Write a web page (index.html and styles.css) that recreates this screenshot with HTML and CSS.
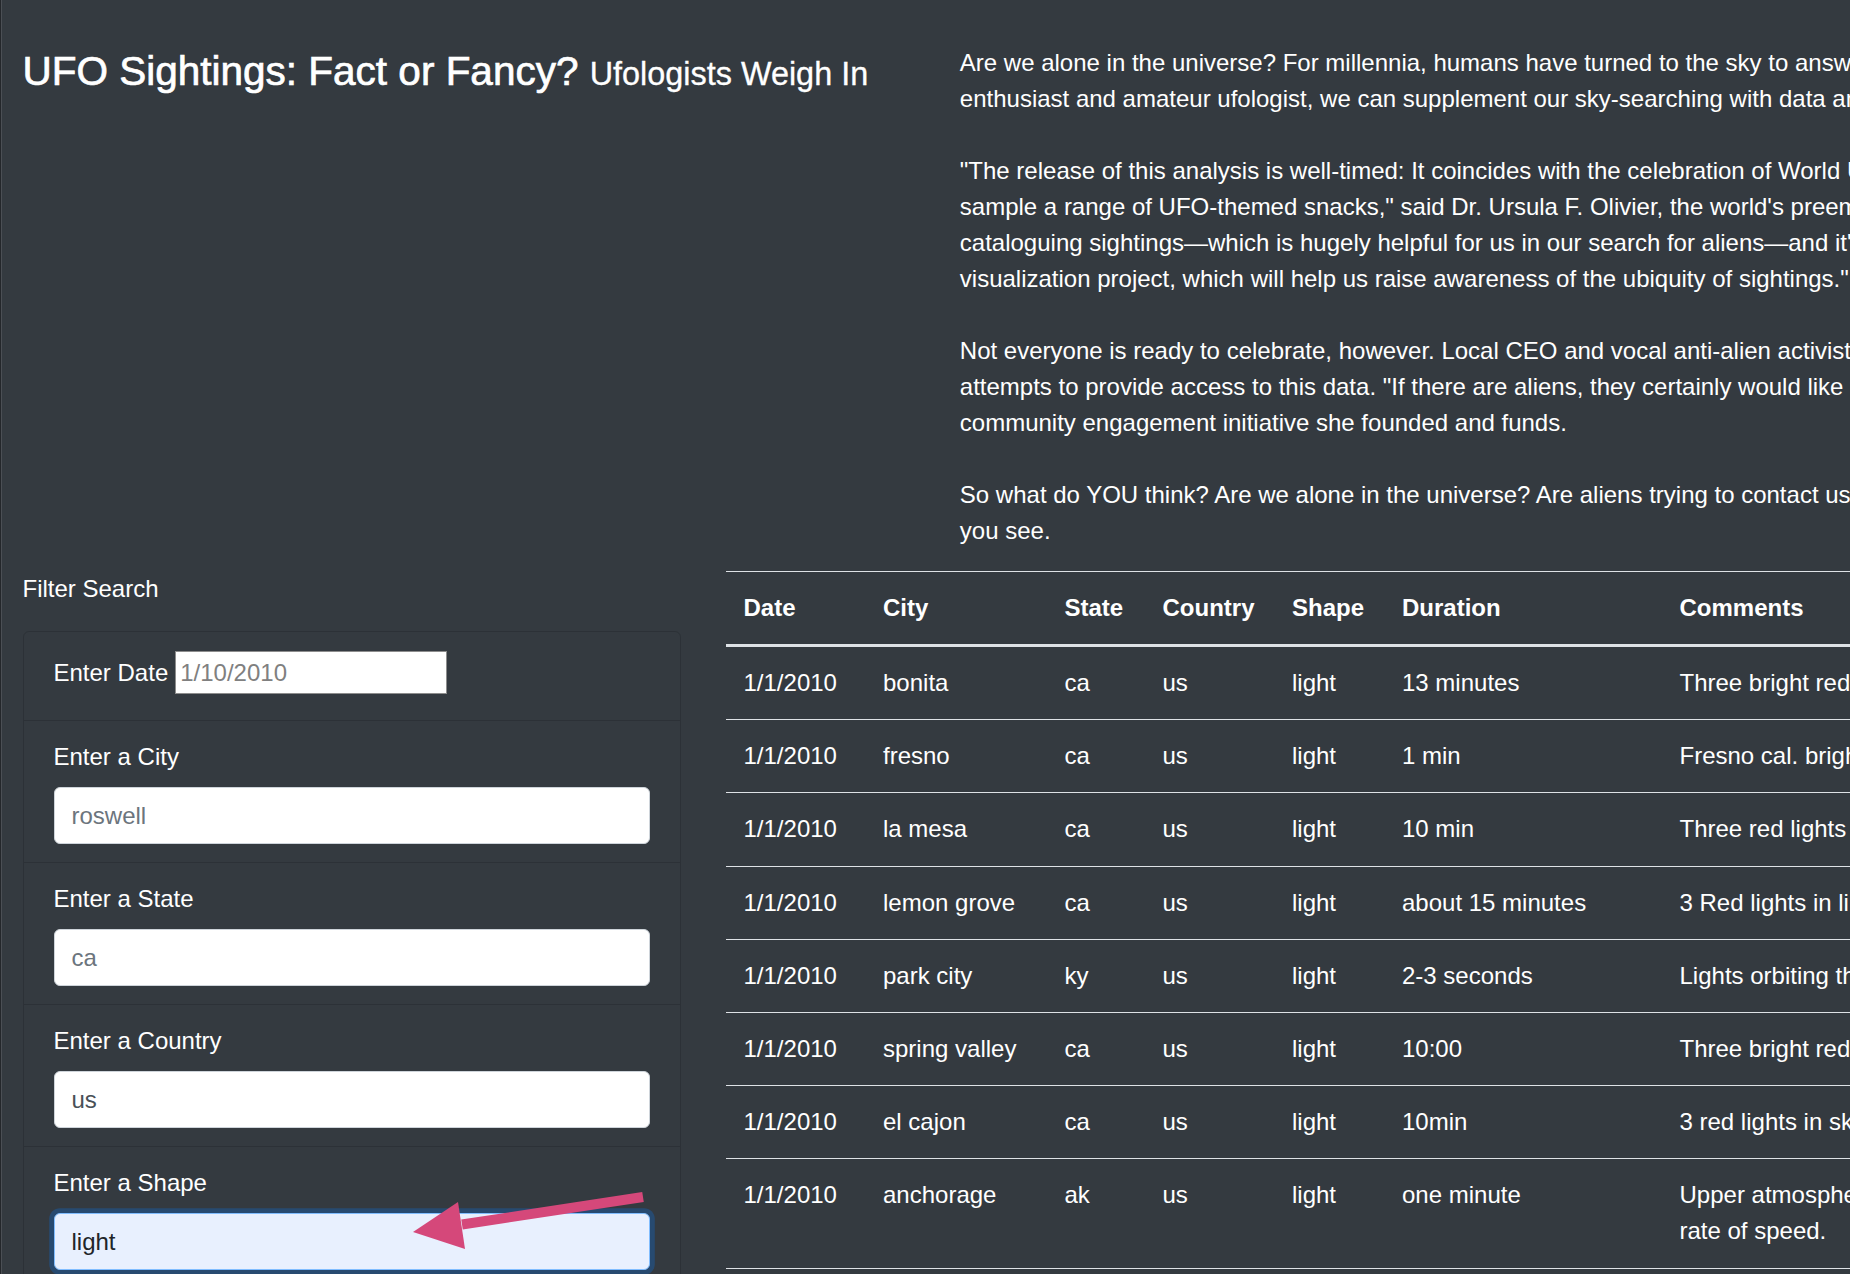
FILE: index.html
```html
<!DOCTYPE html>
<html lang="en">
<head>
<meta charset="utf-8">
<title>UFO Sightings: Fact or Fancy?</title>
<link rel="stylesheet" href="styles.css">
</head>
<body>
<div class="page">
  <div class="intro-row">
    <div class="col">
      <h1 class="title">UFO Sightings: Fact or Fancy? <small>Ufologists Weigh In</small></h1>
    </div>
    <div class="col intro">
      <p>Are we alone in the universe? For millennia, humans have turned to the sky to answer this question, and as a dedicated UFO<br>enthusiast and amateur ufologist, we can supplement our sky-searching with data analysis. Let's see what the data can tell us.</p>
      <p>"The release of this analysis is well-timed: It coincides with the celebration of World UFO Day, when people from across the globe gather to<br>sample a range of UFO-themed snacks," said Dr. Ursula F. Olivier, the world's preeminent ufologist. "Our community has spent decades<br>cataloguing sightings—which is hugely helpful for us in our search for aliens—and it's wonderful to see that work shared through this<br>visualization project, which will help us raise awareness of the ubiquity of sightings."</p>
      <p>Not everyone is ready to celebrate, however. Local CEO and vocal anti-alien activist Jane Doe has vowed to fight any<br>attempts to provide access to this data. "If there are aliens, they certainly would like to keep to themselves," she said at an event for the<br>community engagement initiative she founded and funds.</p>
      <p>So what do YOU think? Are we alone in the universe? Are aliens trying to contact us? Browse the data below and let us know what<br>you see.</p>
    </div>
  </div>

  <div class="data-row">
    <div class="col">
      <h2 class="filter-title">Filter Search</h2>
      <ul class="filter-list">
        <li class="filter-item filter-inline">
          <label for="datetime">Enter Date</label>
          <input class="date-input" id="datetime" type="text" placeholder="1/10/2010">
        </li>
        <li class="filter-item">
          <label for="city">Enter a City</label>
          <input class="form-control" id="city" type="text" placeholder="roswell">
        </li>
        <li class="filter-item">
          <label for="state">Enter a State</label>
          <input class="form-control" id="state" type="text" placeholder="ca">
        </li>
        <li class="filter-item">
          <label for="country">Enter a Country</label>
          <input class="form-control" id="country" type="text" value="us">
        </li>
        <li class="filter-item">
          <label for="shape">Enter a Shape</label>
          <input class="form-control is-focused" id="shape" type="text" value="light">
        </li>
      </ul>
    </div>
    <div class="col">
      <table class="sightings">
        <colgroup>
          <col class="c-date"><col class="c-city"><col class="c-state"><col class="c-country"><col class="c-shape"><col class="c-duration"><col class="c-comments">
        </colgroup>
        <thead>
          <tr><th>Date</th><th>City</th><th>State</th><th>Country</th><th>Shape</th><th>Duration</th><th>Comments</th></tr>
        </thead>
        <tbody>
          <tr><td>1/1/2010</td><td>bonita</td><td>ca</td><td>us</td><td>light</td><td>13 minutes</td><td>Three bright red lights witnessed floating stationary over San Diego New Years Day 2010</td></tr>
          <tr><td>1/1/2010</td><td>fresno</td><td>ca</td><td>us</td><td>light</td><td>1 min</td><td>Fresno cal. bright orange light in the night sky, not a plane or helicopter</td></tr>
          <tr><td>1/1/2010</td><td>la mesa</td><td>ca</td><td>us</td><td>light</td><td>10 min</td><td>Three red lights in the eastern sky moving slowly then fading away</td></tr>
          <tr><td>1/1/2010</td><td>lemon grove</td><td>ca</td><td>us</td><td>light</td><td>about 15 minutes</td><td>3 Red lights in line formation, then triangle, moving south over Lemon Grove</td></tr>
          <tr><td>1/1/2010</td><td>park city</td><td>ky</td><td>us</td><td>light</td><td>2-3 seconds</td><td>Lights orbiting the moon, changing colors from white to red</td></tr>
          <tr><td>1/1/2010</td><td>spring valley</td><td>ca</td><td>us</td><td>light</td><td>10:00</td><td>Three bright red lights in triangular formation, hovering then moving east</td></tr>
          <tr><td>1/1/2010</td><td>el cajon</td><td>ca</td><td>us</td><td>light</td><td>10min</td><td>3 red lights in sky over El Cajon, moving together, then disappeared</td></tr>
          <tr><td>1/1/2010</td><td>anchorage</td><td>ak</td><td>us</td><td>light</td><td>one minute</td><td>Upper atmospheric light moving slowly from north to south, then suddenly accelerated at an incredible rate of speed.</td></tr>
          <tr><td>1/1/2010</td><td>bethel</td><td>ak</td><td>us</td><td>light</td><td>2 minutes</td><td>Bright white light hovering low over the river</td></tr>
        </tbody>
      </table>
    </div>
  </div>

  <svg class="arrow" width="260" height="80" viewBox="0 0 260 80" aria-hidden="true">
    <line x1="243" y1="17" x2="62" y2="44.5" stroke="#d5487a" stroke-width="10"/>
    <polygon points="13,52 58,22 65,69" fill="#d5487a"/>
  </svg>
</div>
</body>
</html>
```

FILE: styles.css
```css
html {
  overflow: hidden;
  background: #343a40;
}

body {
  margin: 0;
  min-height: 100vh;
  background: #343a40;
  color: #fff;
  font-family: "Liberation Sans", Arial, Helvetica, sans-serif;
  font-size: 24px;
  line-height: 36px;
  box-shadow: inset 1px 0 #24272b, inset 2px 0 #4b4f55;
}

.page {
  position: relative;
  width: 2812px;
}

.col {
  padding: 0 22.5px;
  min-width: 0;
}

/* ---------- intro ---------- */
.intro-row {
  display: grid;
  grid-template-columns: 1fr 2fr;
  padding-top: 44.5px;
}

.title {
  margin: 4px 0 0;
  font-size: 40.5px;
  line-height: 44px;
  font-weight: 500;
  -webkit-text-stroke: 0.7px #fff;
  white-space: nowrap;
}

.title small {
  font-size: 80%;
  font-weight: 400;
  -webkit-text-stroke: 0.3px #fff;
}

.intro p {
  margin: 0 0 36px;
  white-space: nowrap;
}

.intro p:last-child {
  margin-bottom: 22.5px;
}

/* ---------- filters ---------- */
.data-row {
  display: grid;
  grid-template-columns: 1fr 3fr;
}

.filter-title {
  margin: 0 0 24px;
  font-size: 24px;
  line-height: 36px;
  font-weight: 400;
}

.filter-list {
  list-style: none;
  margin: 0;
  padding: 0;
  border: 1px solid rgba(0, 0, 0, 0.14);
  border-radius: 6px;
}

.filter-item {
  padding: 18px 30px;
  border-top: 1px solid rgba(0, 0, 0, 0.14);
}

.filter-item label {
  display: block;
  margin-bottom: 12px;
}

.filter-inline {
  display: flex;
  align-items: center;
  gap: 7px;
  padding: 19px 30px 26px;
  border-top: 0;
}

.filter-inline label {
  margin: 0;
}

.date-input {
  box-sizing: border-box;
  width: 272px;
  height: 43px;
  padding: 0 4px;
  border: 1px solid #8d8d8d;
  border-radius: 0;
  background: #fff;
  color: #000;
  font-family: "Liberation Sans", Arial, sans-serif;
  font-size: 24px;
}

.date-input::placeholder {
  color: #808080;
}

.form-control {
  display: block;
  box-sizing: border-box;
  width: 100%;
  height: 57px;
  padding: 9px 17px;
  border: 1px solid #ced4da;
  border-radius: 6px;
  background: #fff;
  color: #495057;
  font-family: "Liberation Sans", Arial, sans-serif;
  font-size: 24px;
  line-height: 36px;
}

.form-control::placeholder {
  color: #6c757d;
}

.form-control.is-focused {
  background: #e8f0fe;
  border-color: #80bdff;
  color: #212529;
  box-shadow: 0 0 0 4.8px rgba(0, 123, 255, 0.25);
}

/* ---------- table ---------- */
.sightings {
  width: 100%;
  table-layout: fixed;
  border-collapse: separate;
  border-spacing: 0;
  color: #fff;
}

.c-date { width: 139.5px; }
.c-city { width: 181.5px; }
.c-state { width: 98px; }
.c-country { width: 129.5px; }
.c-shape { width: 110px; }
.c-duration { width: 277.5px; }

.sightings th {
  text-align: left;
  font-weight: 700;
  padding: 18px;
  border-top: 1px solid #dee2e6;
  border-bottom: 3px solid #dee2e6;
  vertical-align: bottom;
}

.sightings td {
  padding: 18px 18px 18.2px;
  border-top: 1px solid #dee2e6;
  vertical-align: top;
}

.sightings tbody tr:first-child td {
  border-top: 0;
}

/* ---------- annotation ---------- */
.arrow {
  position: absolute;
  left: 400px;
  top: 1180px;
}
```
